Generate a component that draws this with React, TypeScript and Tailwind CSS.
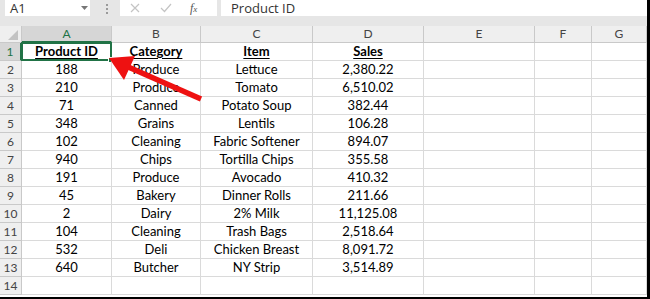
import React from 'react';

const cols = ['A', 'B', 'C', 'D', 'E', 'F', 'G'];

const rows: string[][] = [
  ['Product ID', 'Category', 'Item', 'Sales'],
  ['188', 'Produce', 'Lettuce', '2,380.22'],
  ['210', 'Produce', 'Tomato', '6,510.02'],
  ['71', 'Canned', 'Potato Soup', '382.44'],
  ['348', 'Grains', 'Lentils', '106.28'],
  ['102', 'Cleaning', 'Fabric Softener', '894.07'],
  ['940', 'Chips', 'Tortilla Chips', '355.58'],
  ['191', 'Produce', 'Avocado', '410.32'],
  ['45', 'Bakery', 'Dinner Rolls', '211.66'],
  ['2', 'Dairy', '2% Milk', '11,125.08'],
  ['104', 'Cleaning', 'Trash Bags', '2,518.64'],
  ['532', 'Deli', 'Chicken Breast', '8,091.72'],
  ['640', 'Butcher', 'NY Strip', '3,514.89'],
  [],
];

const FormulaBar: React.FC = () => (
  <div className="flex h-[26px] shrink-0 items-start bg-[#e6e6e6] font-['Open_Sans',sans-serif]">
    <div className="ml-[5px] flex h-[16px] w-[85px] items-center justify-between bg-white pl-[5px] pr-[2px] text-[13px] leading-none text-[#333]">
      <span>A1</span>
      <svg width="7" height="4" viewBox="0 0 7 4">
        <path d="M0 0 L7 0 L3.5 4 Z" fill="#777" />
      </svg>
    </div>
    <div className="ml-[16px] mr-[12px] mt-[4px] flex flex-col gap-[2px]">
      <span className="h-[2px] w-[2px] bg-[#9a9a9a]" />
      <span className="h-[2px] w-[2px] bg-[#9a9a9a]" />
      <span className="h-[2px] w-[2px] bg-[#9a9a9a]" />
    </div>
    <div className="flex h-[16px] w-[97px] items-center bg-white">
      <svg className="ml-[10px]" width="10" height="10" viewBox="0 0 10 10">
        <path d="M1 1 L9 9 M9 1 L1 9" stroke="#c4c4c4" strokeWidth="1.2" />
      </svg>
      <svg className="ml-[20px]" width="12" height="10" viewBox="0 0 12 10">
        <path d="M1 5 L4.5 8.5 L11 1" stroke="#c4c4c4" strokeWidth="1.2" fill="none" />
      </svg>
      <span className="ml-[18px] font-['Liberation_Serif',serif] text-[12px] italic leading-none text-[#555]">
        f<span className="text-[9px]">x</span>
      </span>
    </div>
    <div className="ml-[4px] flex h-[16px] flex-1 items-center bg-white pl-[10px] text-[13px] leading-none text-[#333]">
      Product ID
    </div>
  </div>
);

const App: React.FC = () => {
  return (
    <div className="relative flex h-[299px] w-[650px] flex-col overflow-hidden border-b-2 border-r-[3px] border-black bg-white">
      <FormulaBar />

      <div className="grid grid-cols-[22px_90px_89px_112px_111px_111px_57px_55px] font-['Lato',sans-serif]">
        {/* column headers */}
        <div className="relative h-[17px] border-b border-r border-[#c9c9c9] bg-[#efefef]">
          <svg className="absolute bottom-[2px] right-[3px]" width="10" height="10" viewBox="0 0 10 10">
            <path d="M10 0 L10 10 L0 10 Z" fill="#c3c3c3" />
          </svg>
        </div>
        {cols.map((c) => (
          <div
            key={c}
            className={
              c === 'A'
                ? 'flex h-[17px] items-center justify-center border-b-2 border-r border-b-[#217346] border-r-[#c9c9c9] bg-[#d6d6d6] text-[12px] text-[#217346]'
                : 'flex h-[17px] items-center justify-center border-b border-r border-[#c9c9c9] bg-[#efefef] text-[12px] text-[#444]'
            }
          >
            {c}
          </div>
        ))}

        {rows.map((r, i) => (
          <React.Fragment key={i}>
            <div
              className={
                i === 0
                  ? 'flex h-[18px] items-center justify-center border-b border-r-2 border-b-[#c9c9c9] border-r-[#217346] bg-[#d6d6d6] text-[12px] text-[#217346]'
                  : 'flex h-[18px] items-center justify-center border-b border-r border-[#c9c9c9] bg-[#efefef] text-[12px] text-[#444]'
              }
            >
              {i + 1}
            </div>
            {cols.map((c, j) => (
              <div
                key={c}
                className={
                  'relative flex h-[18px] items-center justify-center border-b border-r border-[#dadada] text-[13px] text-black ' +
                  (i === 0 ? 'font-bold underline decoration-1 underline-offset-2' : '')
                }
              >
                {r[j] ?? ''}
                {i === 0 && j === 0 && (
                  <>
                    <div className="absolute -left-px -top-px bottom-[-1px] right-[-1px] border-2 border-[#217346]" />
                    <div className="absolute bottom-[-3px] right-[-3px] h-[6px] w-[6px] border border-white bg-[#217346]" />
                  </>
                )}
              </div>
            ))}
          </React.Fragment>
        ))}
      </div>

      {/* red arrow pointing at A1 */}
      <svg className="pointer-events-none absolute left-0 top-0" width="650" height="299" viewBox="0 0 650 299">
        <line x1="201" y1="99" x2="126" y2="66" stroke="#ee1111" strokeWidth="5.5" />
        <polygon points="109,58 135,56 124,80" fill="#ee1111" />
      </svg>
    </div>
  );
};

export default App;
